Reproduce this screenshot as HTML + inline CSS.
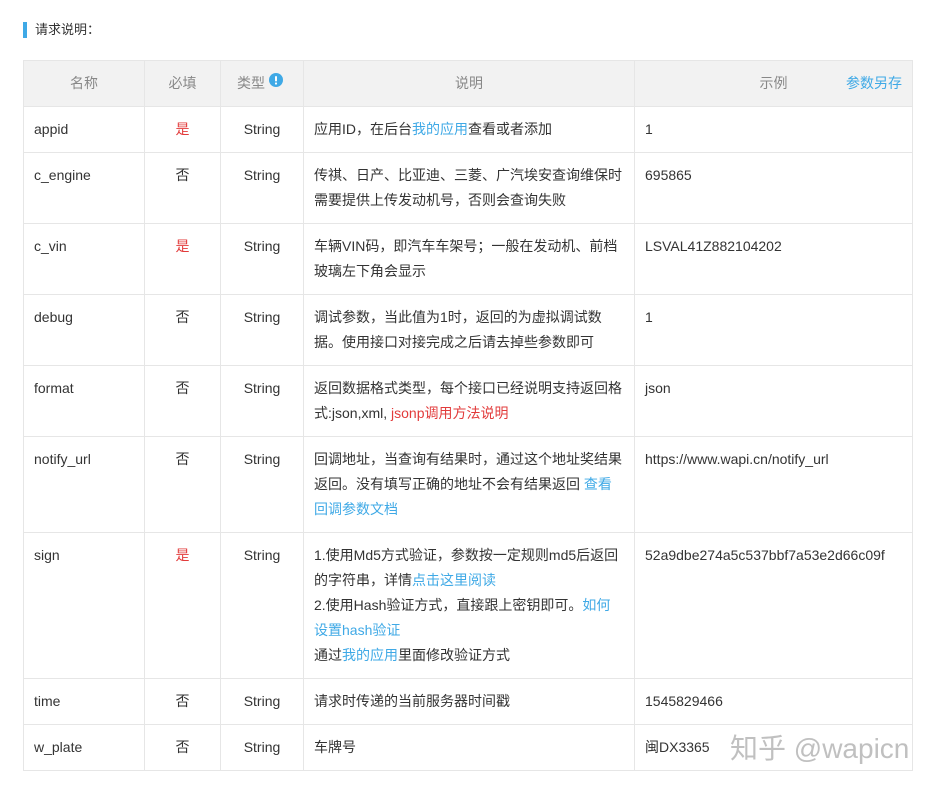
<!DOCTYPE html>
<html><head><meta charset="utf-8"><style>
body{margin:0;background:#fff;font-family:"Liberation Sans","Noto Sans CJK SC",sans-serif;font-size:14px;color:#333;}
.t{position:absolute;left:23px;top:22px;height:16px;border-left:4px solid #3fa9e6;padding-left:8px;line-height:16px;font-size:13px;color:#333}
table{position:absolute;left:23px;top:60px;width:889px;border-collapse:collapse;table-layout:fixed}
td,th{border:1px solid #e6e6e6;padding:10px 10px 10px;line-height:25px;vertical-align:top;text-align:left;word-break:break-all}
th{background:#f2f2f2;color:#888;font-weight:normal;text-align:center;height:25px}
tr td:nth-child(2),tr td:nth-child(3){text-align:center}
.r{color:#e23b3b}.b{color:#3fa9e6}
.wm{position:absolute;left:730px;top:727px;font-size:28px;color:rgba(150,150,150,.6);font-family:"Liberation Sans","Noto Sans CJK SC",sans-serif}
</style></head><body>
<div class="t">请求说明：</div>
<table>
<colgroup><col style="width:121px"><col style="width:76px"><col style="width:83px"><col style="width:331px"><col style="width:278px"></colgroup>
<tr><th>名称</th><th>必填</th><th style="text-align:left;padding-left:16px">类型 <svg width="14" height="14" viewBox="0 0 14 14" style="vertical-align:1px"><circle cx="7" cy="7" r="7" fill="#3fa9e6"/><rect x="6" y="3" width="2" height="5.5" rx="1" fill="#fff"/><circle cx="7" cy="10.5" r="1.1" fill="#fff"/></svg></th><th>说明</th><th style="position:relative">示例<span class="b" style="position:absolute;right:10px;top:10px">参数另存</span></th></tr>
<tr><td>appid</td><td class="r">是</td><td>String</td><td>应用ID，在后台<span class="b">我的应用</span>查看或者添加</td><td>1</td></tr>
<tr><td>c_engine</td><td>否</td><td>String</td><td>传祺、日产、比亚迪、三菱、广汽埃安查询维保时需要提供上传发动机号，否则会查询失败</td><td>695865</td></tr>
<tr><td>c_vin</td><td class="r">是</td><td>String</td><td>车辆VIN码，即汽车车架号；一般在发动机、前档玻璃左下角会显示</td><td>LSVAL41Z882104202</td></tr>
<tr><td>debug</td><td>否</td><td>String</td><td>调试参数，当此值为1时，返回的为虚拟调试数据。使用接口对接完成之后请去掉些参数即可</td><td>1</td></tr>
<tr><td>format</td><td>否</td><td>String</td><td>返回数据格式类型，每个接口已经说明支持返回格式:json,xml, <span class="r">jsonp调用方法说明</span></td><td>json</td></tr>
<tr><td>notify_url</td><td>否</td><td>String</td><td>回调地址，当查询有结果时，通过这个地址奖结果返回。没有填写正确的地址不会有结果返回 <span class="b">查看回调参数文档</span></td><td>https://www.wapi.cn/notify_url</td></tr>
<tr><td>sign</td><td class="r">是</td><td>String</td><td>1.使用Md5方式验证，参数按一定规则md5后返回的字符串，详情<span class="b">点击这里阅读</span><br>2.使用Hash验证方式，直接跟上密钥即可。<span class="b">如何设置hash验证</span><br>通过<span class="b">我的应用</span>里面修改验证方式</td><td style="white-space:nowrap;overflow:hidden">52a9dbe274a5c537bbf7a53e2d66c09f</td></tr>
<tr><td>time</td><td>否</td><td>String</td><td>请求时传递的当前服务器时间戳</td><td>1545829466</td></tr>
<tr><td>w_plate</td><td>否</td><td>String</td><td>车牌号</td><td>闽DX3365</td></tr>
</table>
<div class="wm">知乎 @wapicn</div>
</body></html>
